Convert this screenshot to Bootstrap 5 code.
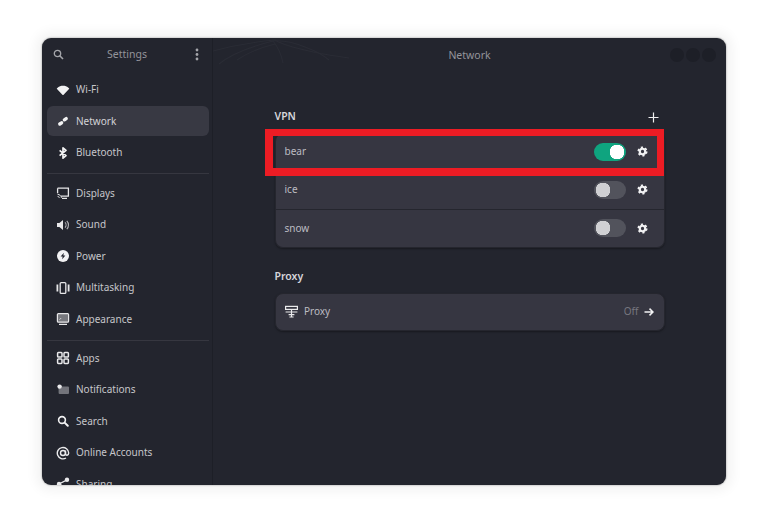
<!DOCTYPE html>
<html lang="en">
<head>
    <meta charset="UTF-8">
    <meta name="viewport" content="width=device-width, initial-scale=1.0">
    <title>Settings - Network</title>
    <link href="https://cdn.jsdelivr.net/npm/bootstrap@5.3.3/dist/css/bootstrap.min.css" rel="stylesheet">
    <style>
        html, body {
            height: 531px;
            overflow: hidden;
        }

        body {
            background-color: #fff;
            font-family: "Noto Sans", "Open Sans", sans-serif;
            font-size: 10.5px;
            color: #c6c6ca;
            padding: 38px 42px 46px;
        }

        .app-window {
            height: 447px;
            background-color: #23252e;
            border-radius: 9px;
            overflow: hidden;
            box-shadow: 0 0 2px rgba(0, 0, 0, .45), 0 0 12px 6px rgba(0, 0, 0, .05);
        }

        .side-pane {
            width: 171px;
            border-right: 1px solid #1d1f27;
        }

        .pane-head {
            height: 33px;
            flex: none;
            color: #93949a;
        }

        .main-head { height: 35px; }

        .side-search { left: 11px; top: 11px; }
        .side-kebab { right: 13px; top: 10px; }

        .side-list {
            padding: 3.5px 3px 0 5px;
            gap: 1.5px;
        }

        .side-link {
            height: 30px;
            flex: none;
            padding: 0 0 0 9px;
            gap: 6px;
            color: #c6c6ca;
            font-size: 10px;
            border-radius: 6px;
        }

        .side-link.active {
            background-color: #383943;
            color: #d2d2d6;
        }

        .side-link svg { flex: none; }

        .side-rule {
            height: 1px;
            flex: none;
            background-color: #363740;
            margin: 4px 0 2.5px;
        }

        .side-rule.rule-tight { margin-bottom: 1px; }

        .main-pane { min-width: 0; }

        .wall-art { left: 0; top: 0; }

        .win-dots { right: 10px; top: 10px; gap: 2px; }

        .win-dot {
            width: 14px;
            height: 14px;
            border-radius: 50%;
            background-color: #1d1f27;
        }

        .main-body {
            width: 390px;
            margin-left: 61.5px;
        }

        .group-label {
            height: 16px;
            font-weight: 600;
            font-size: 10.5px;
            color: #d6d6da;
        }

        .vpn-label { margin-top: 36px; margin-bottom: 7.5px; }
        .proxy-label { margin-top: 20.5px; margin-bottom: 8px; }
        .add-icon { margin-right: 6px; }

        .row-list {
            border-radius: 8px;
            box-shadow: 0 1px 2px rgba(0, 0, 0, .35);
        }

        .row-list .list-group-item {
            height: 38.5px;
            padding: 0 16px 0 9px;
            background-color: #363641;
            border-color: #25262e;
            color: #bcbcc1;
            font-size: 10px;
        }

        .row-list .proxy-row {
            height: 38px;
            padding-right: 10px;
        }

        .red-frame {
            left: -10px;
            top: -3.5px;
            width: 399.5px;
            height: 47px;
            border-style: solid;
            border-color: #ed1c24;
            border-width: 7px 7px 8px 8px;
            pointer-events: none;
        }

        .form-switch.vpn-switch {
            padding: 0;
            margin: 0 11px 0 0;
            min-height: 0;
            line-height: 0;
        }

        .form-switch.vpn-switch .form-check-input {
            float: none;
            margin: 0;
            width: 32px;
            height: 18px;
            border: 0;
            box-shadow: none;
            background-color: #52535c;
            background-image: radial-gradient(circle 7.5px at 9px 9px, #d0d0d3 96%, transparent 100%);
            background-size: auto;
            background-position: 0 0;
        }

        .form-switch.vpn-switch .form-check-input:checked {
            background-color: #0fa47f;
            background-image: radial-gradient(circle 7.5px at 23px 9px, #fff 96%, transparent 100%);
        }

        .off-text { color: #77777f; margin-right: 5px; }
        .proxy-icon { margin-right: 6.5px; }
    </style>
</head>
<body>
    <div class="app-window d-flex">
        <aside class="side-pane d-flex flex-column flex-shrink-0">
            <div class="pane-head position-relative d-flex align-items-center justify-content-center">
                <svg class="side-search position-absolute" width="11" height="11" viewBox="0 0 11 11" fill="none" stroke="#a4a5aa" stroke-width="1.3"><circle cx="4.5" cy="4.5" r="3.2"/><path d="M7 7l3 3" stroke-width="1.6"/></svg>
                <span>Settings</span>
                <svg class="side-kebab position-absolute" width="4" height="13" viewBox="0 0 4 13" fill="#a4a5aa"><circle cx="2" cy="2" r="1.4"/><circle cx="2" cy="6.5" r="1.4"/><circle cx="2" cy="11" r="1.4"/></svg>
            </div>
            <nav class="side-list nav flex-column flex-nowrap">
                <a class="side-link nav-link d-flex align-items-center" href="#">
                    <svg width="14" height="14" viewBox="0 0 14 14" fill="#f2f2f3"><path d="M1 5.2C3 3.4 5 2.8 7 2.8s4 .6 6 2.4c.3.3.3.6 0 .9L7.6 11.8c-.3.3-.9.3-1.2 0L1 6.1c-.3-.3-.3-.6 0-.9z"/></svg>
                    Wi-Fi
                </a>
                <a class="side-link nav-link active d-flex align-items-center" href="#">
                    <svg width="14" height="14" viewBox="0 0 14 14" fill="none" stroke="#f2f2f3" stroke-linecap="round"><path d="M3.8 10L5.6 8.8" stroke-width="3.4"/><path d="M8.4 5.8L10.2 4.6" stroke-width="3.4"/></svg>
                    Network
                </a>
                <a class="side-link nav-link d-flex align-items-center" href="#">
                    <svg width="14" height="14" viewBox="0 0 14 14" fill="none" stroke="#f2f2f3" stroke-width="1.7" stroke-linejoin="round"><path d="M3.6 4.4L10 9.6 7 12.2V1.8l3 2.6-6.4 5.2"/></svg>
                    Bluetooth
                </a>
                <div class="side-rule"></div>
                <a class="side-link nav-link d-flex align-items-center" href="#">
                    <svg width="14" height="14" viewBox="0 0 14 14" fill="none" stroke="#e6e6e8" stroke-width="1.3"><path d="M1.6 2.2h10.8v8H5"/><path d="M1.6 2.2v5"/><path d="M1.6 8.4c2 0 3.6 1.4 3.8 3.4M1.6 10.4c.9 0 1.6.6 1.8 1.4" stroke-width="1"/><path d="M6 12.4h5" stroke-width="1.2"/></svg>
                    Displays
                </a>
                <a class="side-link nav-link d-flex align-items-center" href="#">
                    <svg width="14" height="14" viewBox="0 0 14 14" fill="#e6e6e8"><path d="M1 5h2.4L7 2v10L3.4 9H1z"/><path d="M9 4.4c1.4 1.4 1.4 3.8 0 5.2M10.8 2.8c2.2 2.2 2.2 6.2 0 8.4" fill="none" stroke="#b4b4b8" stroke-width="1.1"/></svg>
                    Sound
                </a>
                <a class="side-link nav-link d-flex align-items-center" href="#">
                    <svg width="14" height="14" viewBox="0 0 14 14"><circle cx="7" cy="7" r="6" fill="#f2f2f3"/><path d="M7.8 3.8L4.6 7.6h2l-.4 2.6 3.2-3.8h-2z" fill="#23252e"/></svg>
                    Power
                </a>
                <a class="side-link nav-link d-flex align-items-center" href="#">
                    <svg width="14" height="14" viewBox="0 0 14 14" fill="none" stroke="#e6e6e8" stroke-width="1.3"><rect x="4.2" y="1.6" width="5.6" height="10.8" rx="1"/><path d="M1.4 3.4v7.2M12.6 3.4v7.2" stroke-width="1.8"/></svg>
                    Multitasking
                </a>
                <a class="side-link nav-link d-flex align-items-center" href="#">
                    <svg width="14" height="14" viewBox="0 0 14 14"><rect x="1.4" y="1.6" width="11.2" height="8.6" rx="1" fill="#77787e" stroke="#e6e6e8" stroke-width="1.2"/><path d="M3.6 7.6l1.4-1.4" stroke="#f2f2f3" stroke-width=".9"/><path d="M3 12.4h8" stroke="#e6e6e8" stroke-width="1.4"/></svg>
                    Appearance
                </a>
                <div class="side-rule rule-tight"></div>
                <a class="side-link nav-link d-flex align-items-center" href="#">
                    <svg width="14" height="14" viewBox="0 0 14 14" fill="none" stroke="#eaeaec" stroke-width="1.5"><rect x="1.6" y="1.6" width="4.4" height="4.4" rx=".8"/><rect x="8" y="1.6" width="4.4" height="4.4" rx=".8"/><rect x="1.6" y="8" width="4.4" height="4.4" rx=".8"/><rect x="8" y="8" width="4.4" height="4.4" rx=".8"/></svg>
                    Apps
                </a>
                <a class="side-link nav-link d-flex align-items-center" href="#">
                    <svg width="14" height="14" viewBox="0 0 14 14"><rect x="2.6" y="3.4" width="10.4" height="7.6" rx="1" fill="#73747b"/><circle cx="3.6" cy="3.6" r="2.2" fill="#eaeaec"/></svg>
                    Notifications
                </a>
                <a class="side-link nav-link d-flex align-items-center" href="#">
                    <svg width="14" height="14" viewBox="0 0 14 14" fill="none" stroke="#f2f2f3" stroke-width="1.6"><circle cx="6" cy="6" r="3.4"/><path d="M8.6 8.6l3.2 3.2" stroke-width="2" stroke-linecap="round"/></svg>
                    Search
                </a>
                <a class="side-link nav-link d-flex align-items-center" href="#">
                    <svg width="14" height="14" viewBox="0 0 14 14" fill="none" stroke="#eaeaec" stroke-width="1.4"><circle cx="7" cy="7" r="2.5"/><path d="M9.5 4.6v3.2c0 2 3.2 2 3.2-.8A5.7 5.7 0 1 0 10 12"/></svg>
                    Online Accounts
                </a>
                <a class="side-link nav-link d-flex align-items-center" href="#">
                    <svg width="14" height="14" viewBox="0 0 14 14" fill="#eaeaec"><circle cx="3" cy="7" r="2.2"/><circle cx="11" cy="2.8" r="2.2"/><circle cx="11" cy="11.2" r="2.2"/><path d="M3 7l8-4.2M3 7l8 4.2" stroke="#eaeaec" stroke-width="1.3"/></svg>
                    Sharing
                </a>
            </nav>
        </aside>

        <main class="main-pane flex-grow-1 position-relative">
            <svg class="wall-art position-absolute" width="150" height="32" viewBox="0 0 150 32" fill="none" stroke="#2a2c35" stroke-width="1.1">
                <path d="M0 13C18 8 40 4 62 2c8 5 20 8 34 11 12 3 26 5 40 7"/>
                <path d="M6 26C18 16 36 9 60 3c5 6 8 12 10 22"/>
                <path d="M60 3c10-1 22 2 32 6 8 3 16 6 24 13"/>
                <path d="M24 22C34 15 46 10 62 6"/>
            </svg>
            <div class="win-dots position-absolute d-flex">
                <div class="win-dot"></div>
                <div class="win-dot"></div>
                <div class="win-dot"></div>
            </div>
            <div class="pane-head main-head d-flex align-items-center justify-content-center">Network</div>

            <div class="main-body">
                <div class="group-label vpn-label d-flex align-items-center justify-content-between">
                    <span>VPN</span>
                    <svg class="add-icon" width="11" height="11" viewBox="0 0 11 11" stroke="#eeeeef" stroke-width="1.2"><path d="M5.5 .5v10M.5 5.5h10"/></svg>
                </div>
                <div class="position-relative">
                    <ul class="row-list list-group">
                        <li class="list-group-item d-flex align-items-center">
                            <span class="flex-grow-1">bear</span>
                            <div class="form-check form-switch vpn-switch"><input class="form-check-input" type="checkbox" role="switch" checked></div>
                            <svg width="11" height="11" viewBox="0 0 12 12" fill="none" stroke="#f2f2f3"><circle cx="6" cy="6" r="3" stroke-width="2.4"/><circle cx="6" cy="6" r="4.6" stroke-width="1.8" stroke-dasharray="2.4 2.42"/></svg>
                        </li>
                        <li class="list-group-item d-flex align-items-center">
                            <span class="flex-grow-1">ice</span>
                            <div class="form-check form-switch vpn-switch"><input class="form-check-input" type="checkbox" role="switch"></div>
                            <svg width="11" height="11" viewBox="0 0 12 12" fill="none" stroke="#f2f2f3"><circle cx="6" cy="6" r="3" stroke-width="2.4"/><circle cx="6" cy="6" r="4.6" stroke-width="1.8" stroke-dasharray="2.4 2.42"/></svg>
                        </li>
                        <li class="list-group-item d-flex align-items-center">
                            <span class="flex-grow-1">snow</span>
                            <div class="form-check form-switch vpn-switch"><input class="form-check-input" type="checkbox" role="switch"></div>
                            <svg width="11" height="11" viewBox="0 0 12 12" fill="none" stroke="#f2f2f3"><circle cx="6" cy="6" r="3" stroke-width="2.4"/><circle cx="6" cy="6" r="4.6" stroke-width="1.8" stroke-dasharray="2.4 2.42"/></svg>
                        </li>
                    </ul>
                    <div class="red-frame position-absolute"></div>
                </div>

                <div class="group-label proxy-label d-flex align-items-center">Proxy</div>
                <ul class="row-list list-group">
                    <li class="list-group-item proxy-row d-flex align-items-center">
                        <svg class="proxy-icon" width="13" height="13" viewBox="0 0 13 13" fill="none" stroke="#eaeaec" stroke-width="1.2"><rect x=".6" y="1.4" width="11.8" height="3"/><path d="M.6 7h11.8M6.5 4.4V12M3.6 9.6h5.8M4.4 12h4.2"/></svg>
                        <span class="flex-grow-1">Proxy</span>
                        <span class="off-text">Off</span>
                        <svg width="10" height="10" viewBox="0 0 10 10" fill="none" stroke="#f2f2f3" stroke-width="1.5"><path d="M.5 5h8M5.5 1.6L9 5 5.5 8.4"/></svg>
                    </li>
                </ul>
            </div>
        </main>
    </div>
    <script src="https://cdn.jsdelivr.net/npm/bootstrap@5.3.3/dist/js/bootstrap.bundle.min.js"></script>
</body>
</html>
